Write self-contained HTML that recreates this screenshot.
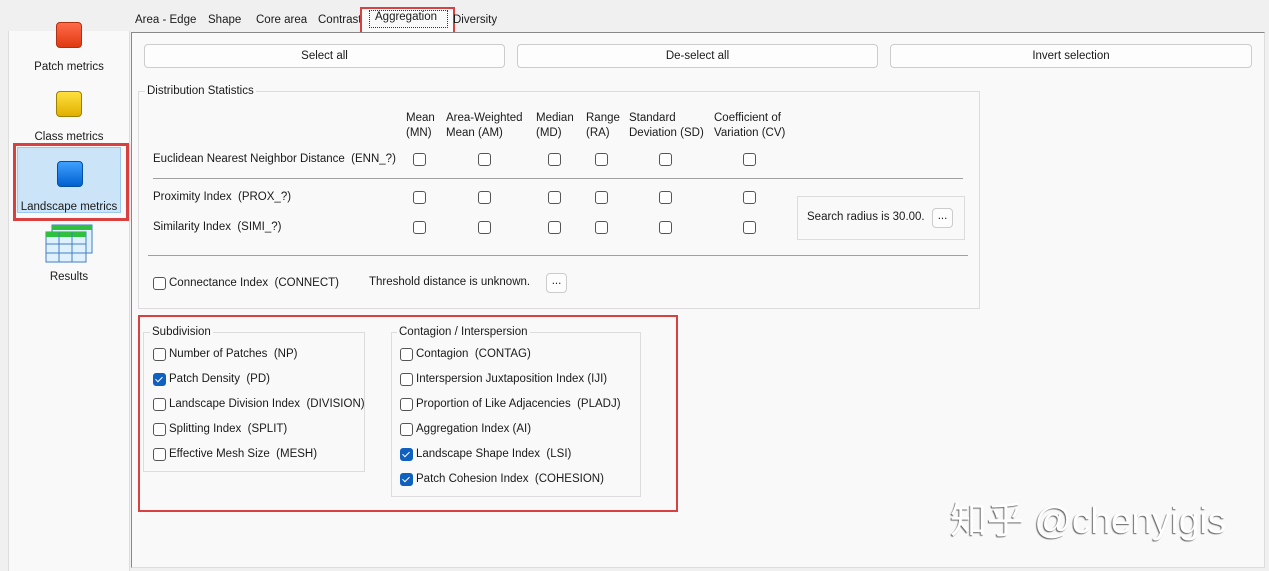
<!DOCTYPE html><html><head><style>
body{margin:0;width:1269px;height:569px;background:#f0f0f0;font-family:"Segoe UI","Liberation Sans",sans-serif;font-size:11.5px;line-height:17px;color:#1a1a1a;position:relative;overflow:hidden}
.a{position:absolute;white-space:pre}
.cb{position:absolute;width:11px;height:11px;border:1px solid #555;border-radius:3px;background:#fff}
.ck{background:#1060c0;border-color:#1060c0}
.ck::after{content:"";position:absolute;left:3px;top:1px;width:3px;height:6px;border:solid #fff;border-width:0 1.5px 1.5px 0;transform:rotate(45deg)}
.btn{position:absolute;height:22px;border:1px solid #ccc;border-radius:4px;background:#fdfdfd;text-align:center;line-height:22px}
.grp{position:absolute;border:1px solid #dcdcdc}
.lg{position:absolute;background:#f9f9f9;padding:0 2px;white-space:pre}
.hl{position:absolute;height:1px;background:#a0a0a0}
</style></head><body>
<div class="a" style="left:8px;top:31px;width:120px;height:540px;background:#f9f9f9;border-left:1px solid #ddd;border-right:1px solid #ddd"></div>
<div class="a" style="left:56px;top:22px;width:24px;height:24px;border-radius:4px;background:linear-gradient(#ff6a4a,#e03a10);border:1px solid #b03010"></div>
<div class="a" style="left:0;top:59px;width:138px;text-align:center">Patch metrics</div>
<div class="a" style="left:56px;top:91px;width:24px;height:24px;border-radius:4px;background:linear-gradient(#ffe040,#e0b000);border:1px solid #a08000"></div>
<div class="a" style="left:0;top:129px;width:138px;text-align:center">Class metrics</div>
<div class="a" style="left:13px;top:143px;width:110px;height:72px;border:3px solid #d94040"></div>
<div class="a" style="left:17px;top:147px;width:104px;height:66px;background:#cce4f7;border:1px solid #99c9ef;box-sizing:border-box"></div>
<div class="a" style="left:57px;top:161px;width:24px;height:24px;border-radius:4px;background:linear-gradient(#40a0ff,#0060d0);border:1px solid #0050a0"></div>
<div class="a" style="left:17px;top:199px;width:104px;text-align:center">Landscape metrics</div>
<svg class="a" style="left:45px;top:224px" width="48" height="40"><rect x="7" y="1" width="40" height="28" fill="#dff0ff" stroke="#4080c0"/><rect x="7" y="1" width="40" height="5" fill="#30c040"/><rect x="1" y="8" width="40" height="30" fill="#dff0ff" stroke="#4080c0"/><rect x="1" y="8" width="40" height="5" fill="#30c040"/><path d="M1 20H41M1 29H41M14 8V38M27 8V38" stroke="#4080c0"/></svg>
<div class="a" style="left:0;top:269px;width:138px;text-align:center">Results</div>
<div class="a" style="left:131px;top:10px;height:22px;width:370px;background:#f0f0f0"></div>
<div class="a" style="left:135px;top:12px">Area - Edge</div>
<div class="a" style="left:208px;top:12px">Shape</div>
<div class="a" style="left:256px;top:12px">Core area</div>
<div class="a" style="left:318px;top:12px;width:44px;overflow:hidden">Contrast</div>
<div class="a" style="left:360px;top:7px;width:91px;height:24px;border:2px solid #d94040;background:#f9f9f9"></div>
<div class="a" style="left:369px;top:10px;width:77px;height:16px;border:1px dotted #333"></div>
<div class="a" style="left:375px;top:9px">Aggregation</div>
<div class="a" style="left:453px;top:12px">Diversity</div>
<div class="a" style="left:131px;top:32px;width:1132px;height:534px;background:#f9f9f9;border:1px solid #888;border-right-color:#ddd;border-bottom-color:#ddd"></div>
<div class="btn" style="left:144px;top:44px;width:359px">Select all</div>
<div class="btn" style="left:517px;top:44px;width:359px">De-select all</div>
<div class="btn" style="left:890px;top:44px;width:360px">Invert selection</div>
<div class="grp" style="left:138px;top:91px;width:840px;height:216px"></div>
<div class="lg" style="left:145px;top:83px">Distribution Statistics</div>
<div class="a" style="left:406px;top:111px;line-height:15px">Mean
(MN)</div>
<div class="a" style="left:446px;top:111px;line-height:15px">Area-Weighted
Mean (AM)</div>
<div class="a" style="left:536px;top:111px;line-height:15px">Median
(MD)</div>
<div class="a" style="left:586px;top:111px;line-height:15px">Range
(RA)</div>
<div class="a" style="left:629px;top:111px;line-height:15px">Standard
Deviation (SD)</div>
<div class="a" style="left:714px;top:111px;line-height:15px">Coefficient of
Variation (CV)</div>
<div class="a" style="left:153px;top:151px">Euclidean Nearest Neighbor Distance  (ENN_?)</div>
<div class="a" style="left:153px;top:189px">Proximity Index  (PROX_?)</div>
<div class="a" style="left:153px;top:219px">Similarity Index  (SIMI_?)</div>
<div class="hl" style="left:153px;top:178px;width:810px"></div>
<div class="hl" style="left:148px;top:255px;width:820px"></div>
<div class="grp" style="left:797px;top:196px;width:166px;height:42px"></div>
<div class="a" style="left:807px;top:209px">Search radius is 30.00.</div>
<div class="btn" style="left:932px;top:208px;width:19px;height:18px;line-height:14px">...</div>
<div class="cb" style="left:153px;top:277px"></div>
<div class="a" style="left:169px;top:275px">Connectance Index  (CONNECT)</div>
<div class="a" style="left:369px;top:274px">Threshold distance is unknown.</div>
<div class="btn" style="left:546px;top:273px;width:19px;height:18px;line-height:14px">...</div>
<div id="cbs"></div>
<div class="a" style="left:138px;top:315px;width:536px;height:193px;border:2px solid #d94040"></div>
<div class="grp" style="left:143px;top:332px;width:220px;height:138px"></div>
<div class="lg" style="left:150px;top:324px">Subdivision</div>
<div class="grp" style="left:391px;top:332px;width:248px;height:163px"></div>
<div class="lg" style="left:397px;top:324px">Contagion / Interspersion</div>
<div class="cb" style="left:153px;top:348px"></div><div class="a" style="left:169px;top:346px">Number of Patches  (NP)</div>
<div class="cb ck" style="left:153px;top:373px"></div><div class="a" style="left:169px;top:371px">Patch Density  (PD)</div>
<div class="cb" style="left:153px;top:398px"></div><div class="a" style="left:169px;top:396px">Landscape Division Index  (DIVISION)</div>
<div class="cb" style="left:153px;top:423px"></div><div class="a" style="left:169px;top:421px">Splitting Index  (SPLIT)</div>
<div class="cb" style="left:153px;top:448px"></div><div class="a" style="left:169px;top:446px">Effective Mesh Size  (MESH)</div>
<div class="cb" style="left:400px;top:348px"></div><div class="a" style="left:416px;top:346px">Contagion  (CONTAG)</div>
<div class="cb" style="left:400px;top:373px"></div><div class="a" style="left:416px;top:371px">Interspersion Juxtaposition Index (IJI)</div>
<div class="cb" style="left:400px;top:398px"></div><div class="a" style="left:416px;top:396px">Proportion of Like Adjacencies  (PLADJ)</div>
<div class="cb" style="left:400px;top:423px"></div><div class="a" style="left:416px;top:421px">Aggregation Index (AI)</div>
<div class="cb ck" style="left:400px;top:448px"></div><div class="a" style="left:416px;top:446px">Landscape Shape Index  (LSI)</div>
<div class="cb ck" style="left:400px;top:473px"></div><div class="a" style="left:416px;top:471px">Patch Cohesion Index  (COHESION)</div>
<div class="a" style="left:950px;top:490px;font-size:37px;line-height:normal;color:#fff;text-shadow:-1px 1px 1px #666;font-family:'Liberation Sans','Noto Sans CJK SC',sans-serif">知乎 @chenyigis</div>
<script>
var xs=[419,484,554,601,665,749],ys=[159,197,227],h='';
ys.forEach(function(y){xs.forEach(function(x){h+='<div class="cb" style="left:'+(x-6)+'px;top:'+(y-6)+'px"></div>'})});
document.getElementById('cbs').innerHTML=h;
</script>
</body></html>
